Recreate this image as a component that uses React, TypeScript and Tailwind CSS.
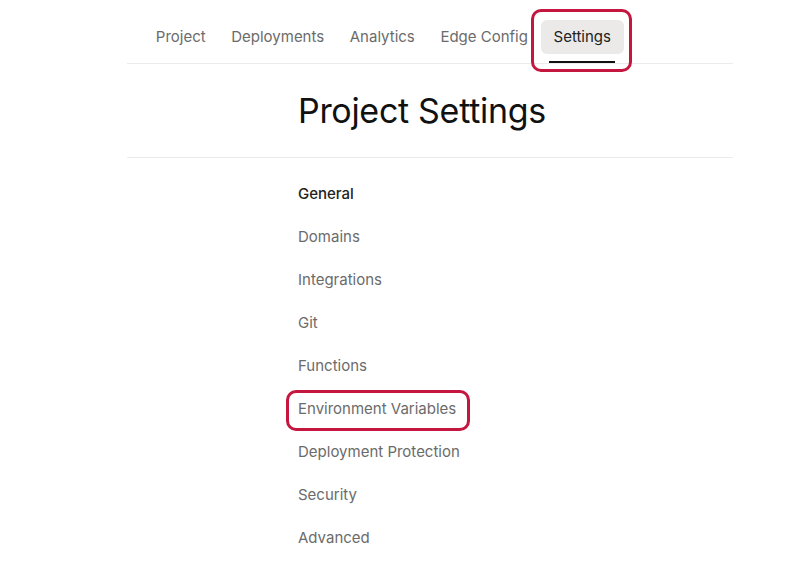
const tabs = ["Project", "Deployments", "Analytics", "Edge Config", "Settings"];

const menu = [
  "General",
  "Domains",
  "Integrations",
  "Git",
  "Functions",
  "Environment Variables",
  "Deployment Protection",
  "Security",
  "Advanced",
];

const HILITE = "border-[3px] border-[#c5163f] rounded-[10px]";

export default function App() {
  return (
    <div className="w-[800px] h-[568px] bg-white overflow-hidden font-['Inter','Liberation_Sans',sans-serif]">
      <div className="ml-[127px] w-[606px]">
        {/* tab bar */}
        <nav className="h-[64px] border-b border-[#ececec] flex items-start pl-[16px] pt-[20px]">
          {tabs.map((t) => {
            const active = t === "Settings";
            return (
              <div key={t} className="relative h-[43px]">
                <div
                  className={`h-[34px] px-[12.8px] flex items-center rounded-md text-[15px] ${
                    active ? "bg-[#ebeae9] text-[#222]" : "text-[#6b6b6b]"
                  }`}
                >
                  {t}
                </div>
                {active && (
                  <>
                    <span className="absolute left-[8px] right-[9px] bottom-0 h-[2px] bg-[#111]" />
                    <span className={`absolute -left-[10px] -right-[8px] -top-[11px] -bottom-[9px] ${HILITE}`} />
                  </>
                )}
              </div>
            );
          })}
        </nav>

        {/* heading */}
        <div className="h-[94px] border-b border-[#ececec] pl-[171px] flex items-center">
          <h1 className="text-[34px] font-normal text-[#111] tracking-[-0.3px]">Project Settings</h1>
        </div>

        {/* side menu */}
        <ul className="pl-[171px] pt-[15px]">
          {menu.map((m) => (
            <li key={m} className="h-[42.9px] flex items-center">
              <span
                className={`relative text-[15px] leading-[20px] ${
                  m === "General" ? "text-[#222] font-medium" : "text-[#6b6b6b]"
                }`}
              >
                {m}
                {m === "Environment Variables" && (
                  <span className={`absolute -left-[12px] -right-[14px] -top-[9px] -bottom-[12px] ${HILITE}`} />
                )}
              </span>
            </li>
          ))}
        </ul>
      </div>
    </div>
  );
}
